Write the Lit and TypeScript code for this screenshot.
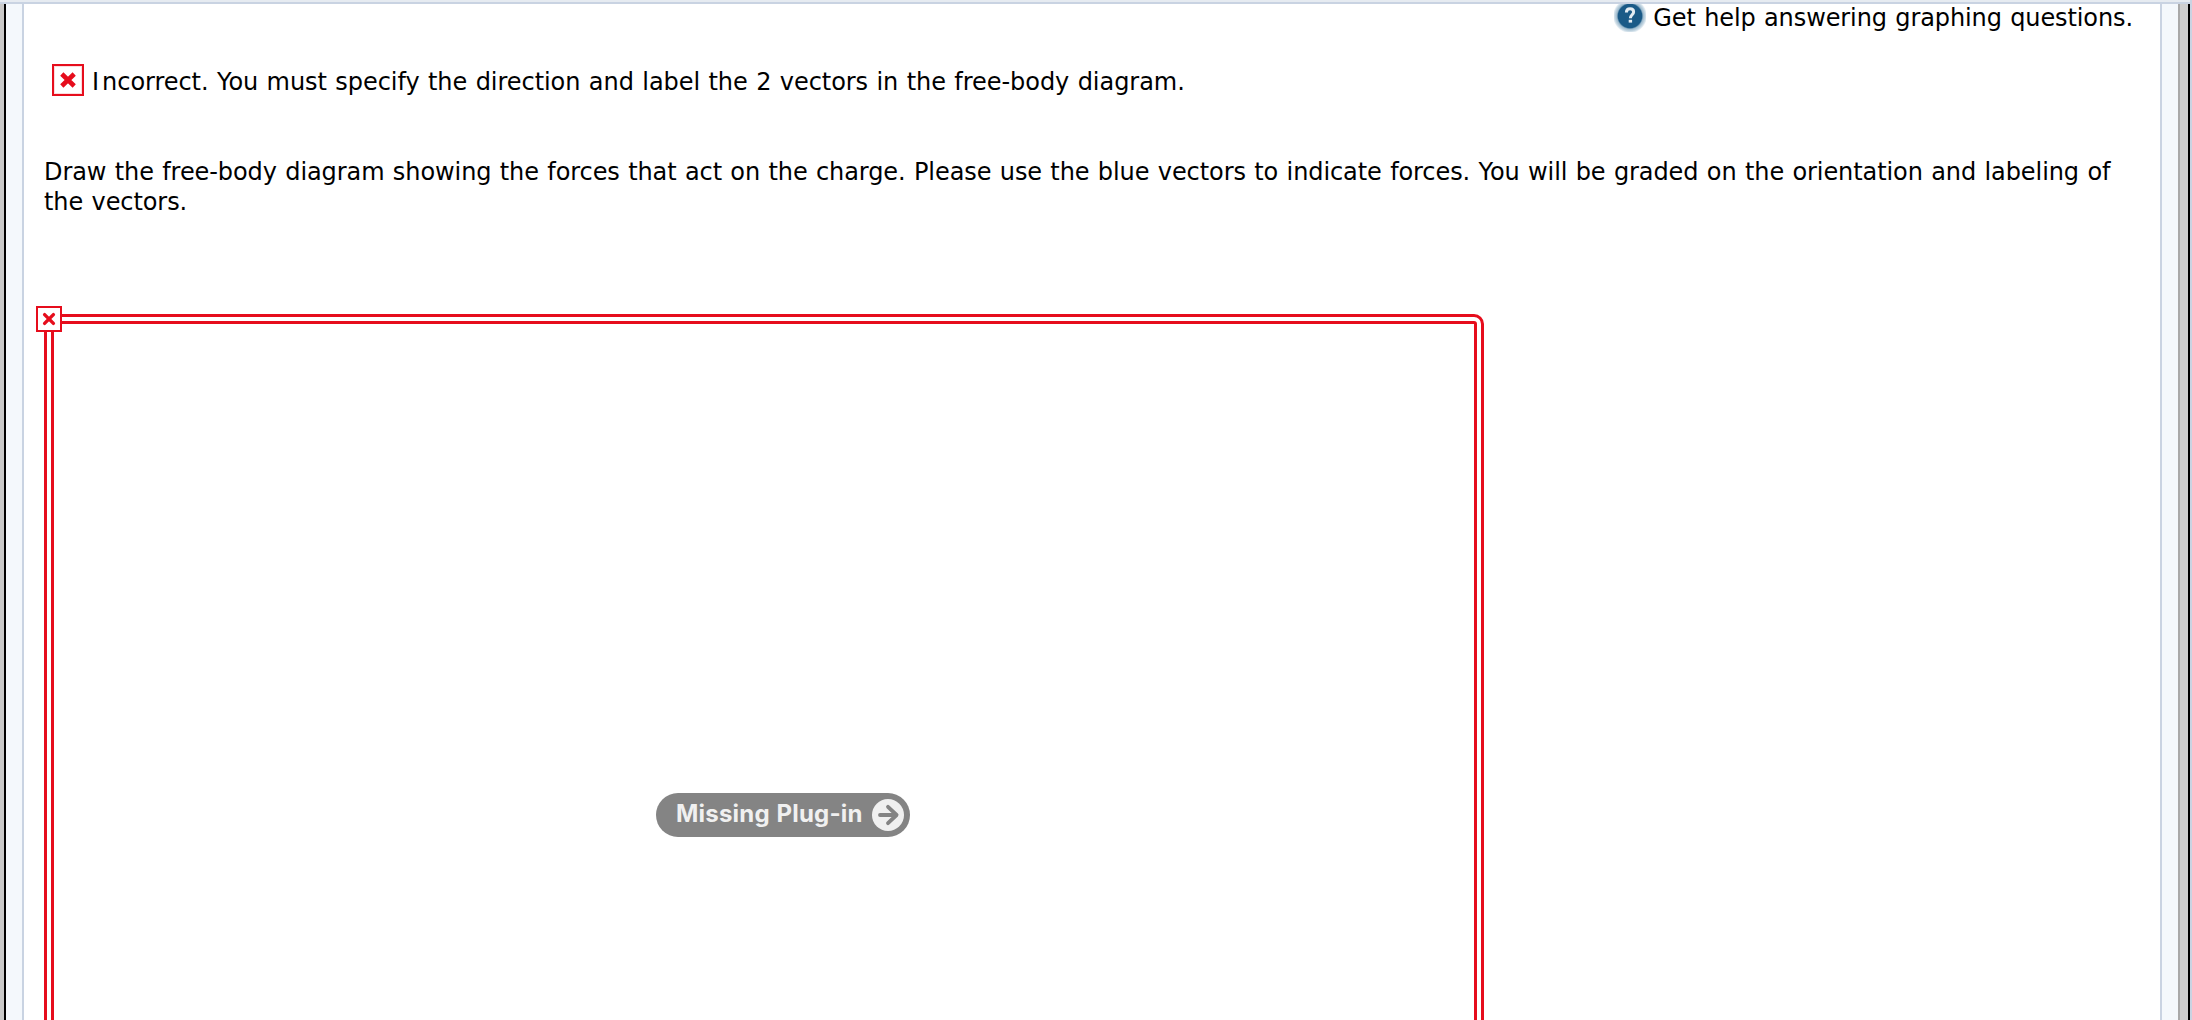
import { LitElement, html, css } from "lit";
import { customElement, property } from "lit/decorators.js";

@customElement("wrong-mark")
export class WrongMark extends LitElement {
  @property({ type: Boolean, reflect: true })
  small = false;

  static styles = css`
    :host {
      display: block;
      box-sizing: border-box;
      flex: none;
      width: 32px;
      height: 32px;
      border: 2px solid #e60d1c;
      background: white;
      box-shadow: inset 0 0 0 1px #fbdcde;
    }

    :host([small]) {
      width: 26px;
      height: 26px;
      box-shadow: none;
    }

    .cross {
      display: block;
      width: 100%;
      height: 100%;
    }
  `;

  render() {
    return this.small
      ? html`<svg class="cross" viewBox="0 0 22 22">
          <path d="M6.6 6.6 15.4 15.4M15.4 6.6 6.6 15.4" stroke="#e60d1c" stroke-width="3.4" stroke-linecap="round" />
        </svg>`
      : html`<svg class="cross" viewBox="0 0 28 28">
          <path d="M7.8 8 20.2 20M20.2 8 7.8 20" stroke="#e60d1c" stroke-width="4.6" />
        </svg>`;
  }
}

@customElement("plugin-notice")
export class PluginNotice extends LitElement {
  static styles = css`
    :host {
      display: flex;
      align-items: center;
      justify-content: space-between;
      box-sizing: border-box;
      width: 254px;
      height: 44px;
      padding: 0 6px 0 20px;
      border-radius: 22px;
      background: #848484;
      color: #f0f0f0;
    }

    .label {
      padding-bottom: 2px;
      font-family: Inter, "Liberation Sans", sans-serif;
      font-size: 24px;
      font-weight: 700;
      letter-spacing: 0.2px;
      white-space: nowrap;
    }

    .arrow {
      width: 32px;
      height: 32px;
    }
  `;

  render() {
    return html`
      <span class="label">Missing Plug-in</span>
      <svg class="arrow" viewBox="0 0 32 32" fill="none">
        <circle cx="16" cy="16" r="16" fill="#f0f0f0" />
        <path
          d="M8 16H24M16 7.8 24.6 16 16 24.2"
          stroke="#848484"
          stroke-width="3.8"
          stroke-linecap="round"
          stroke-linejoin="round"
        />
      </svg>
    `;
  }
}

@customElement("app-root")
export class AppRoot extends LitElement {
  static styles = css`
    :host {
      display: flex;
      height: 1020px;
      overflow: hidden;
      background: #c9d3e2;
      font-family: Verdana, "DejaVu Sans", sans-serif;
      font-size: 24px;
      line-height: 30px;
      word-spacing: 0.82px;
      color: black;
    }

    .window {
      display: flex;
      flex-direction: column;
      width: 2190px;
    }

    .top-edge {
      flex: none;
      height: 2px;
      border-bottom: 2px solid #c9d3e2;
      background: #e6ebf1;
    }

    .body {
      display: flex;
      flex: 1;
      min-height: 0;
      box-sizing: border-box;
      border-left: 4px solid #c9c9c9;
    }

    .gutter {
      flex: none;
      width: 16px;
      background: #f4f8fc;
    }

    .gutter.left {
      border-left: 2px solid black;
      border-right: 2px solid #c9d3e2;
    }

    .gutter.right {
      border-left: 2px solid #c9d3e2;
      border-right: 2px solid #a9a9a9;
    }

    .track {
      flex: none;
      width: 8px;
      background: #cfcfcf;
      border-right: 2px solid black;
    }

    .content {
      flex: 1;
      min-width: 0;
      overflow: hidden;
      background: white;
    }

    .help {
      display: flex;
      justify-content: flex-end;
      gap: 7px;
      height: 32px;
      margin-top: -4px;
      padding-right: 27px;
      letter-spacing: -0.1px;
    }

    .help-text {
      margin-top: 3px;
    }

    .help-icon {
      width: 32px;
      height: 32px;
    }

    .result {
      display: flex;
      gap: 8px;
      margin-top: 32px;
      padding-left: 28px;
      letter-spacing: -0.045px;
    }

    .result-text {
      margin-top: 3px;
    }

    /* The capital I is narrow, give it some room */
    .result-text::first-letter {
      letter-spacing: 3px;
    }

    .result-text {
      display: block;
    }

    .question {
      margin: 60px 40px 0 20px;
      letter-spacing: -0.08px;
    }

    .diagram {
      position: relative;
      display: flex;
      justify-content: center;
      box-sizing: border-box;
      width: 1440px;
      height: 1002px;
      margin: 97px 0 0 20px;
      padding-top: 469px;
      padding-left: 38px;
      border: 10px double #e60d1c;
      border-radius: 10px;
    }

    /* Sits over the frame's top left corner */
    .badge {
      position: absolute;
      top: -18px;
      left: -18px;
    }
  `;

  render() {
    return html`
      <div class="window">
        <div class="top-edge"></div>
        <div class="body">
          <div class="gutter left"></div>
          <main class="content">
            <div class="help">
              <svg class="help-icon" viewBox="0 0 32 32">
                <defs>
                  <radialGradient id="halo">
                    <stop offset="0.69" stop-color="#1a5a87" />
                    <stop offset="0.77" stop-color="#9dbacd" />
                    <stop offset="0.9" stop-color="#c9dae5" />
                    <stop offset="1" stop-color="#f6f9fb" />
                  </radialGradient>
                </defs>
                <circle cx="16" cy="16" r="17" fill="url(#halo)" />
                <path
                  d="M12.4 12.6C12.4 9.8 14 8.8 16.1 8.8C18.4 8.8 19.6 10 19.6 11.9C19.6 14.6 16.4 14.9 16.4 18.2"
                  fill="none"
                  stroke="#e3ecf2"
                  stroke-width="3"
                />
                <rect x="14.7" y="19.8" width="3.4" height="2.8" fill="#e3ecf2" />
              </svg>
              <span class="help-text">Get help answering graphing questions.</span>
            </div>

            <div class="result">
              <wrong-mark></wrong-mark>
              <span class="result-text"
                >Incorrect. You must specify the direction and label the 2 vectors in the free-body diagram.</span
              >
            </div>

            <p class="question">
              Draw the free-body diagram showing the forces that act on the charge. Please use the blue vectors to
              indicate forces. You will be graded on the orientation and labeling of the vectors.
            </p>

            <div class="diagram">
              <wrong-mark class="badge" small></wrong-mark>
              <plugin-notice></plugin-notice>
            </div>
          </main>
          <div class="gutter right"></div>
          <div class="track"></div>
        </div>
      </div>
    `;
  }
}
